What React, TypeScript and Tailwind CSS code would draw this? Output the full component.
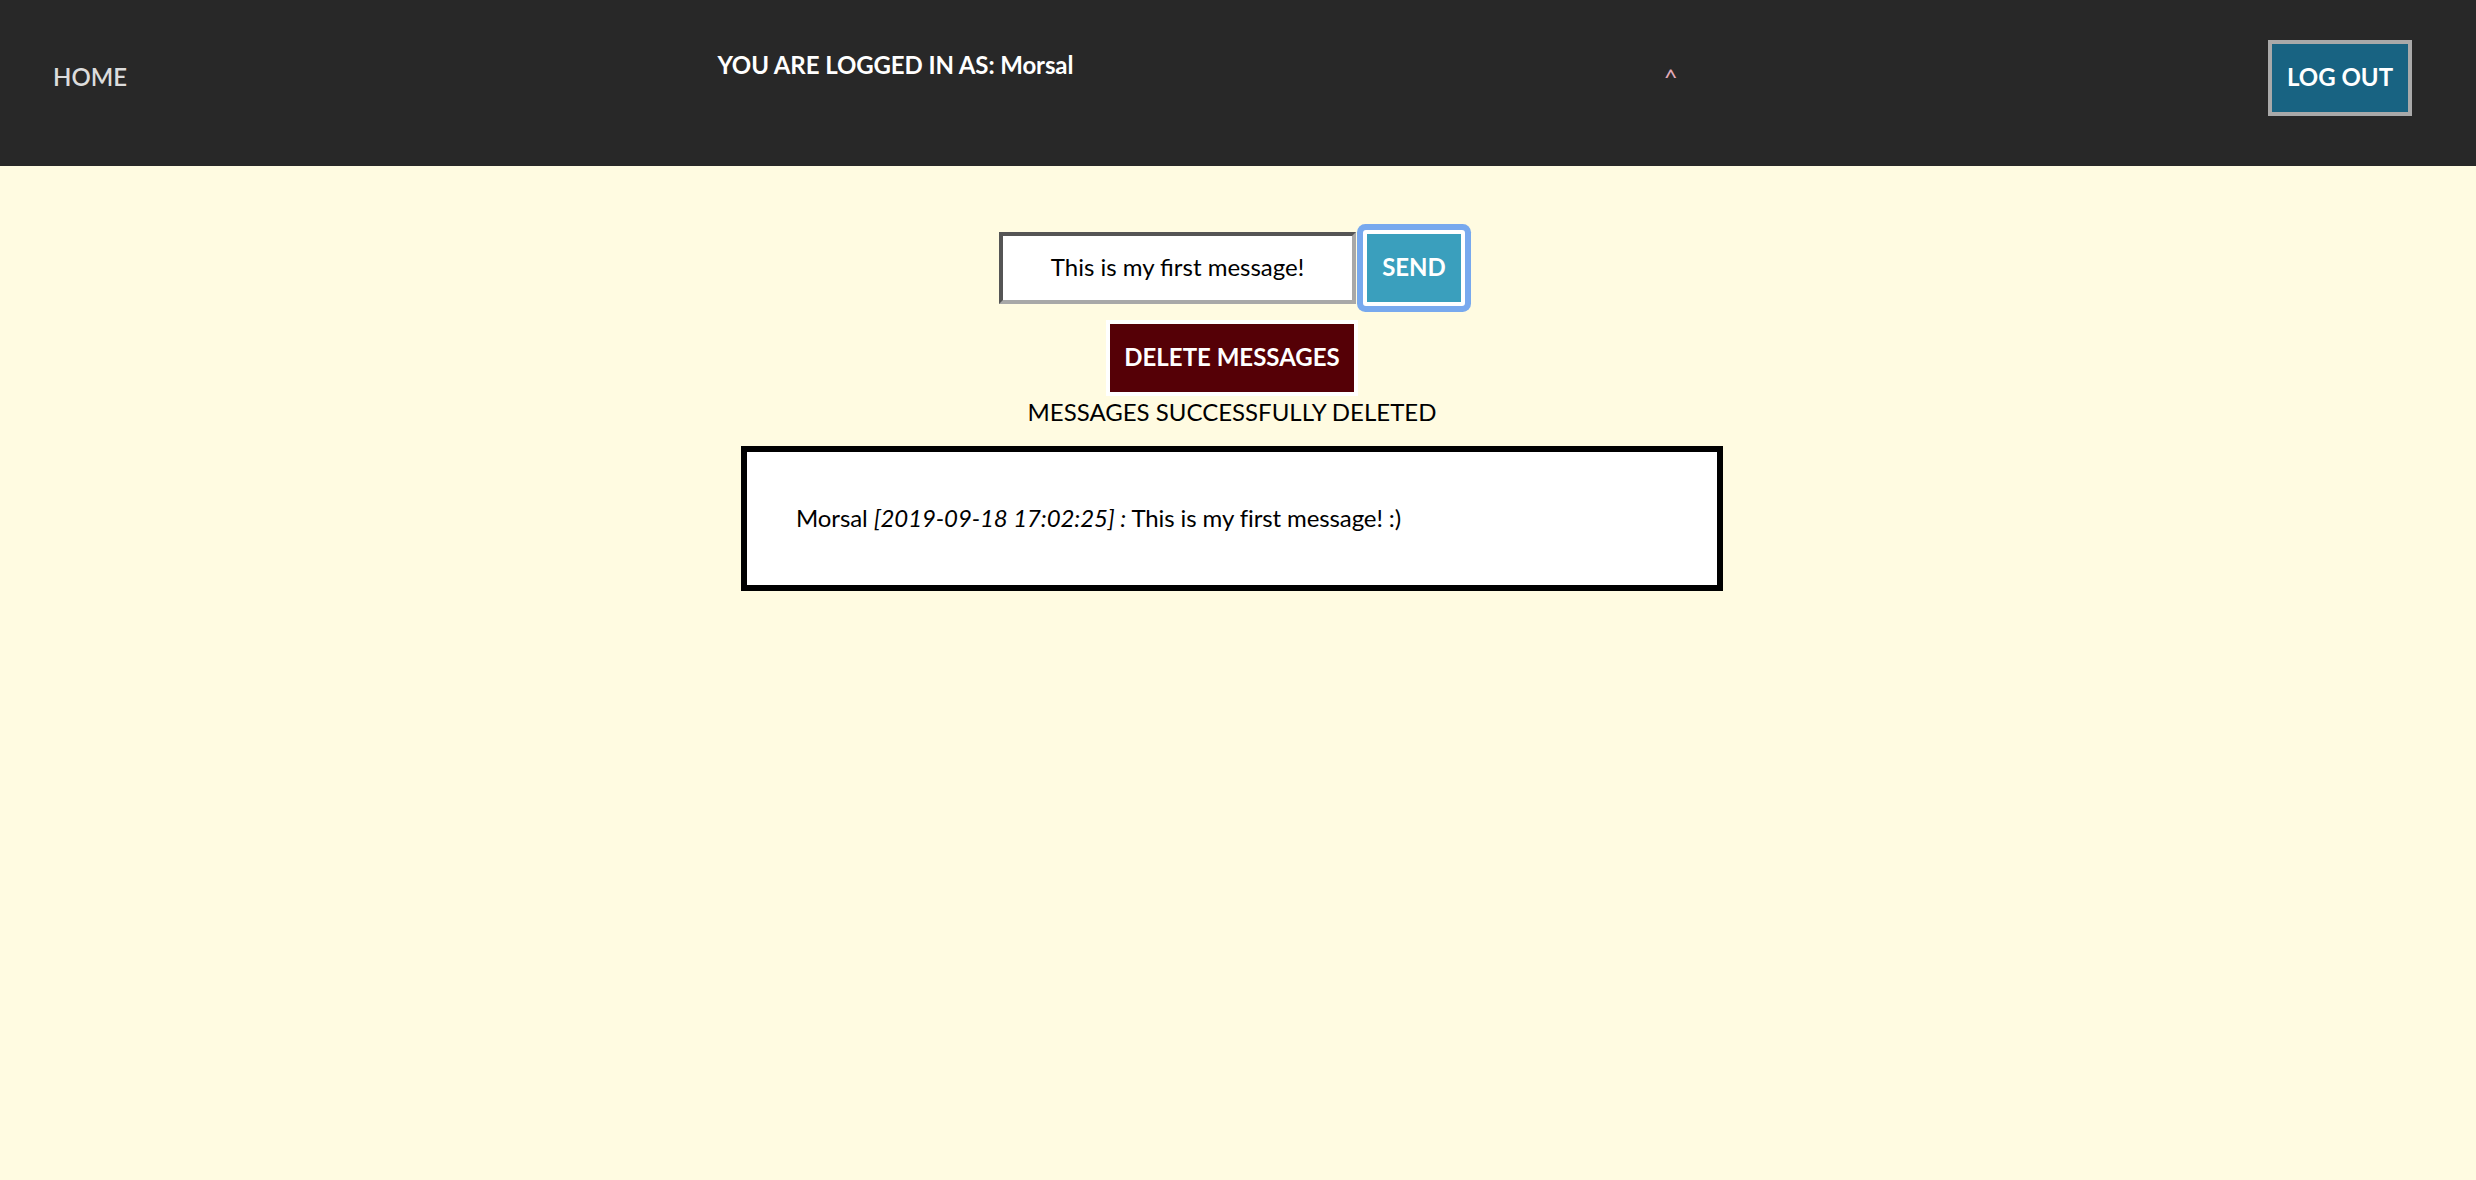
export default function App() {
  return (
    <div className="min-h-screen bg-[#fffbe1] font-['Lato','Liberation_Sans',sans-serif] text-[24px] leading-[29px] text-black">
      <header className="h-[166px] bg-[#282828] flex items-start justify-between pt-[40px] pl-[53px] pr-[64px]">
        <a href="#" className="mt-[22px] text-[#dcdcdc] font-semibold">
          HOME
        </a>
        <div className="mt-[10px] text-white font-bold tracking-[-0.1px]">YOU ARE LOGGED IN AS: Morsal</div>
        <span className="mt-[22px] text-[#e3aab9]">^</span>
        <button className="h-[76px] w-[144px] border-4 border-[#a9a9a9] bg-[#186382] pb-[3px] text-white font-bold">
          LOG OUT
        </button>
      </header>

      <main className="flex flex-col items-center pr-[12px]">
        <form className="mt-[64px] flex items-center" onSubmit={(e) => e.preventDefault()}>
          <input
            type="text"
            defaultValue="This is my first message!"
            className="h-[72px] w-[357px] border-4 border-t-[#555555] border-l-[#555555] border-b-[#a8a8a8] border-r-[#a8a8a8] bg-white pb-[3px] text-center text-black outline-none"
          />
          <button
            type="submit"
            className="ml-[7px] h-[76px] w-[102px] rounded-[3px] border-4 border-white bg-[#3a9fbd] pb-[3px] text-white font-bold ring-[6px] ring-[#78a9ee]"
          >
            SEND
          </button>
        </form>

        <button className="mt-[14px] h-[76px] w-[252px] border-4 border-white bg-[#550006] pb-[3px] text-white font-bold">
          DELETE MESSAGES
        </button>

        <p className="mt-[1px]">MESSAGES SUCCESSFULLY DELETED</p>

        <div className="mt-[20px] w-[982px] border-[6px] border-black bg-white pl-[49px] pr-[49px] pt-[51px] pb-[53px]">
          <p className="tracking-[-0.1px]">
            Morsal <em>[2019-09-18 17:02:25] :</em> This is my first message! :)
          </p>
        </div>
      </main>
    </div>
  )
}
